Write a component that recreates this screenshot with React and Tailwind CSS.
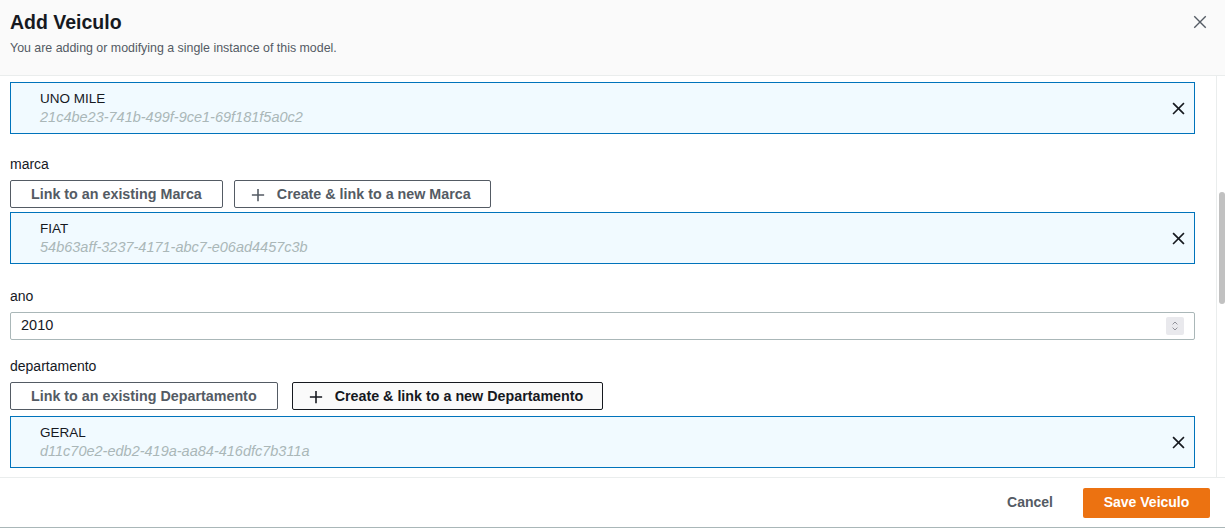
import React from 'react';

// Modal dialog for adding a Veiculo record

const font = { fontFamily: '"Liberation Sans", Arial, sans-serif' };

function CloseIcon({ className }) {
  return (
    <svg viewBox="0 0 16 16" className={className} fill="none" stroke="currentColor" strokeLinecap="square">
      <path d="M2 2l12 12M14 2L2 14" />
    </svg>
  );
}

function PlusIcon() {
  return (
    <svg viewBox="0 0 16 16" className="w-[14px] h-[14px]" fill="none" stroke="currentColor" strokeWidth="1.8">
      <path d="M8 1v14M1 8h14" />
    </svg>
  );
}

function LinkedRecord({ name, id }) {
  return (
    <div className="flex items-center h-[52px] border border-[#0073bb] bg-[#f1faff] pl-[29px] pr-[9px]">
      <div className="flex-1 flex flex-col leading-[19px]">
        <span className="text-[13.5px] text-[#16191f]">{name}</span>
        <span className="text-[14.5px] italic text-[#aab7b8]">{id}</span>
      </div>
      <button className="text-[#16191f]">
        <CloseIcon className="w-[13px] h-[13px] [stroke-width:2]" />
      </button>
    </div>
  );
}

function LinkButtons({ model, active }) {
  return (
    <div className="flex gap-[11px] mt-[6px]">
      <button className="h-[28px] px-[20px] pt-[1px] border border-[#545b64] rounded-[2px] text-[14.3px] font-bold text-[#545b64] bg-white">
        Link to an existing {model}
      </button>
      <button
        className={
          active
            ? 'ml-[3px] h-[28px] pl-[16px] pr-[19px] pt-[1px] flex items-center gap-[12px] border border-[#16191f] rounded-[2px] text-[14.3px] font-bold text-[#16191f] bg-[#fafafa]'
            : 'h-[28px] pl-[16px] pr-[19px] pt-[1px] flex items-center gap-[12px] border border-[#545b64] rounded-[2px] text-[14.3px] font-bold text-[#545b64] bg-white'
        }
      >
        <PlusIcon />
        Create &amp; link to a new {model}
      </button>
    </div>
  );
}

export default function App() {
  return (
    <div className="w-[1225px] h-[528px] flex flex-col bg-white overflow-hidden" style={font}>
      {/* Header */}
      <div className="h-[76px] shrink-0 bg-[#fafafa] border-b border-[#eaeded] flex items-start justify-between pl-[10px] pr-[18px]">
        <div className="pt-[9px]">
          <h2 className="text-[19.5px] font-bold leading-[26px] text-[#16191f]">Add Veiculo</h2>
          <p className="mt-[5px] text-[12.4px] leading-[16px] text-[#545b64]">
            You are adding or modifying a single instance of this model.
          </p>
        </div>
        <button className="mt-[15px] text-[#545b64]">
          <CloseIcon className="w-[14px] h-[14px] [stroke-width:1.6]" />
        </button>
      </div>

      {/* Scrollable body */}
      <div className="flex-1 flex min-h-0">
        <div className="flex-1 overflow-hidden pl-[10px] pr-[21px] pt-[6px]">
          <LinkedRecord name="UNO MILE" id="21c4be23-741b-499f-9ce1-69f181f5a0c2" />

          <div className="mt-[20px]">
            <label className="block text-[14px] leading-[20px] text-[#16191f]">marca</label>
            <LinkButtons model="Marca" />
            <div className="mt-[4px]">
              <LinkedRecord name="FIAT" id="54b63aff-3237-4171-abc7-e06ad4457c3b" />
            </div>
          </div>

          <div className="mt-[22px]">
            <label className="block text-[14px] leading-[20px] text-[#16191f]">ano</label>
            <div className="mt-[6px] h-[28px] border border-[#aab7b8] rounded-[2px] flex items-center pl-[10px] pr-[10px]">
              <span className="flex-1 text-[14.5px] text-[#16191f]">2010</span>
              <div className="w-[18px] h-[18px] bg-[#e9e9ed] rounded-[2px] flex flex-col items-center justify-center text-[#8d8d94]">
                <svg viewBox="0 0 10 14" className="w-[8px] h-[12px]" fill="none" stroke="currentColor" strokeWidth="1.2">
                  <path d="M2 5l3-3 3 3M2 9l3 3 3-3" />
                </svg>
              </div>
            </div>
          </div>

          <div className="mt-[16px]">
            <label className="block text-[14px] leading-[20px] text-[#16191f]">departamento</label>
            <LinkButtons model="Departamento" active />
            <div className="mt-[6px]">
              <LinkedRecord name="GERAL" id="d11c70e2-edb2-419a-aa84-416dfc7b311a" />
            </div>
          </div>
        </div>

        {/* Scrollbar */}
        <div className="w-[9px] shrink-0 border-l border-[#eaeded] pl-[2px] pt-[116px]">
          <div className="w-[6px] h-[112px] rounded-full bg-[#c1c1c1]" />
        </div>
      </div>

      {/* Footer */}
      <div className="h-[51px] shrink-0 border-t border-[#eaeded] border-b border-b-[#aab7b8] flex items-center justify-end gap-[10px] pr-[15px]">
        <button className="h-[30px] px-[20px] text-[14px] font-bold text-[#545b64]">Cancel</button>
        <button className="h-[30px] w-[127px] rounded-[2px] bg-[#ec7211] text-[14px] font-bold text-white">
          Save Veiculo
        </button>
      </div>
    </div>
  );
}
